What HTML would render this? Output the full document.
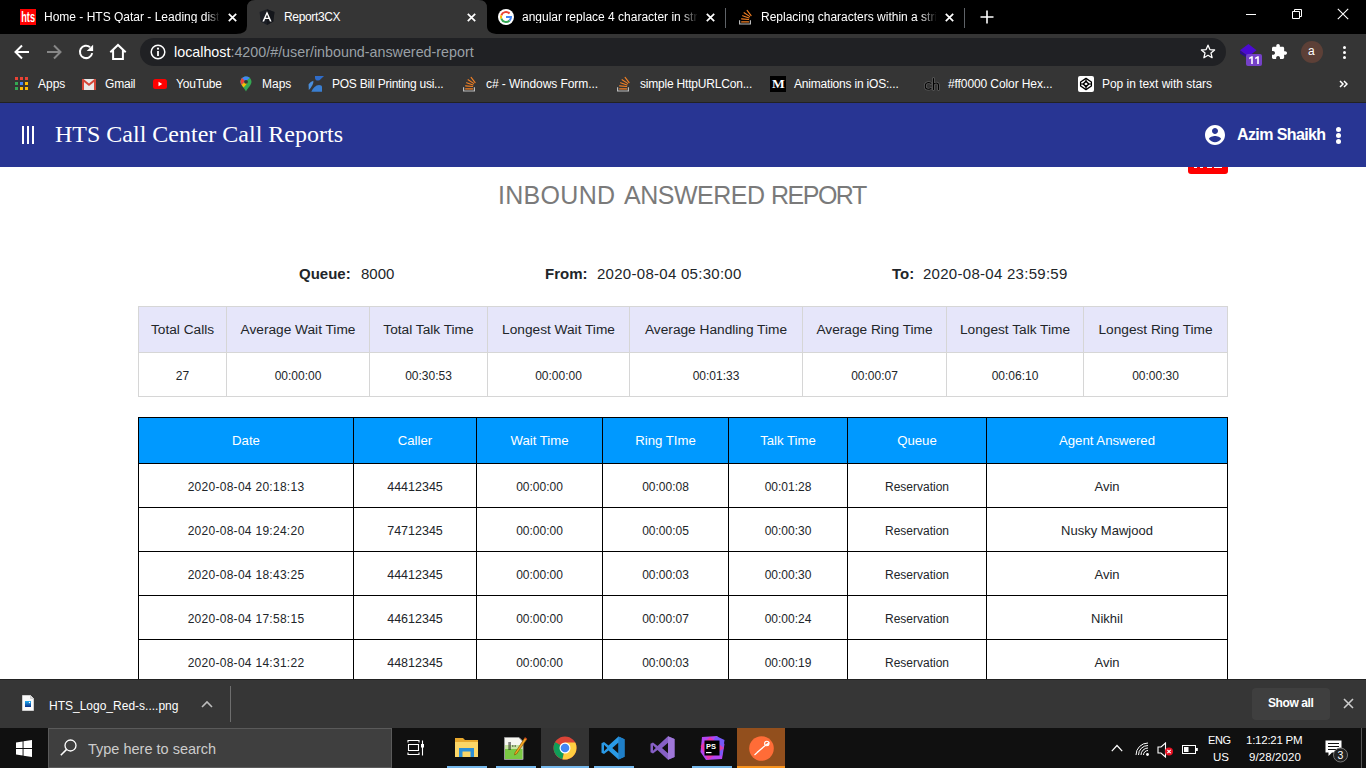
<!DOCTYPE html>
<html><head><meta charset="utf-8">
<style>
*{box-sizing:border-box;margin:0;padding:0}
html,body{width:1366px;height:768px;overflow:hidden;background:#fff;font-family:"Liberation Sans",sans-serif;position:relative}
.a{position:absolute}
.t{position:absolute;white-space:nowrap;line-height:1}
#tabs{left:0;top:0;width:1366px;height:34px;background:#000}
#toolbar{left:0;top:34px;width:1366px;height:68px;background:#353535}
#hdr{left:0;top:102px;width:1366px;height:65px;background:#283593;border-top:1px solid #222}
#dl{left:0;top:679px;width:1366px;height:49px;background:#363636;border-top:1px solid #222}
#task{left:0;top:728px;width:1366px;height:40px;background:#101010}
table{border-collapse:collapse;position:absolute;table-layout:fixed}
#sum{left:138px;top:306px;width:1089px;font-size:13.7px;color:#212529}
#sum td{border:1px solid #d6d6d6;text-align:center;padding:0}
#sum tr.h td{background:#e6e6fa;height:46px}
#sum tr.v td{height:44px;font-size:12px;padding-top:2px}
#main{left:138px;top:417px;width:1089px;font-size:12.5px;color:#212529}
#main td{border:1px solid #000;text-align:center;padding:0}
#main tr.h td{background:#0099ff;color:#fff;height:46px;font-size:13.2px}
#main tr.v td{height:44px;padding-top:2px}
#main td.tm{font-size:12px}
#main td.dt{font-size:12px;letter-spacing:0.28px}
#main td.r{font-size:12px}
#main td.n{font-size:13px}
.bm{top:9px;font-size:12px;color:#fff}
</style></head><body>
<!-- TAB STRIP -->
<div id="tabs" class="a">
  <!-- tab1 -->
  <svg class="a" style="left:20px;top:9px" width="16" height="16" viewBox="0 0 16 16"><rect width="16" height="16" fill="#ff0000"/><text x="1.2" y="13" font-family="Liberation Sans" font-weight="700" font-size="15" fill="#fff" textLength="13.8" lengthAdjust="spacingAndGlyphs">hts</text></svg>
  <div class="t" style="left:44px;top:11px;font-size:12px;color:#fff;width:176px;overflow:hidden;-webkit-mask-image:linear-gradient(90deg,#000 163px,transparent 176px)">Home - HTS Qatar - Leading distributor</div>
  <svg class="a" style="left:228px;top:12.5px" width="9" height="9" viewBox="0 0 9 9"><path d="M0.8 0.8L8.2 8.2M8.2 0.8L0.8 8.2" stroke="#fff" stroke-width="1.7"/></svg>
  <!-- active tab -->
  <svg class="a" style="left:236px;top:0" width="263" height="34" viewBox="0 0 263 34"><path d="M0 34 Q11 34 11 26 L11 8 Q11 0 19 0 L243 0 Q251 0 251 8 L251 26 Q251 34 263 34 Z" fill="#353535"/></svg>
  <svg class="a" style="left:259px;top:9px" width="16" height="16" viewBox="0 0 16 16"><path d="M8 0.3L15.4 2.9L14.3 12.6L8 16L1.7 12.6L0.6 2.9Z" fill="#1c1f26"/><path d="M8 0.3L15.4 2.9L14.3 12.6L8 16Z" fill="#14161b"/><path d="M8 2.2L3.4 12.6H5.1L6.1 10.1H9.9L10.9 12.6H12.6ZM8 5.5L9.3 8.7H6.7Z" fill="#fff"/></svg>
  <div class="t" style="left:284px;top:11px;font-size:12px;color:#fff;letter-spacing:-0.35px">Report3CX</div>
  <svg class="a" style="left:467px;top:12.5px" width="9" height="9" viewBox="0 0 9 9"><path d="M0.8 0.8L8.2 8.2M8.2 0.8L0.8 8.2" stroke="#fff" stroke-width="1.7"/></svg>
  <!-- tab3 -->
  <svg class="a" style="left:498px;top:9px" width="16" height="16" viewBox="0 0 16 16"><circle cx="8" cy="8" r="8" fill="#fff"/><g fill="none" stroke-width="2"><path d="M11.54 4.46A5 5 0 0 0 3.3 6.29" stroke="#ea4335"/><path d="M3.3 6.29A5 5 0 0 0 3.3 9.71" stroke="#fbbc05"/><path d="M3.3 9.71A5 5 0 0 0 11.54 11.54" stroke="#34a853"/><path d="M11.54 11.54A5 5 0 0 0 13 8H8" stroke="#4285f4"/></g></svg>
  <div class="t" style="left:522px;top:11px;font-size:12px;color:#fff;width:175px;overflow:hidden;-webkit-mask-image:linear-gradient(90deg,#000 160px,transparent 176px)">angular replace 4 character in string</div>
  <svg class="a" style="left:706px;top:12.5px" width="9" height="9" viewBox="0 0 9 9"><path d="M0.8 0.8L8.2 8.2M8.2 0.8L0.8 8.2" stroke="#fff" stroke-width="1.7"/></svg>
  <div class="a" style="left:725px;top:8px;width:1px;height:20px;background:#5f6368"></div>
  <!-- tab4 -->
  <svg class="a" style="left:739px;top:8.5px" width="13" height="16" viewBox="0 0 13 16"><path d="M0.6 11.2V15H11.4V11.2" fill="none" stroke="#bcbcbc" stroke-width="1.2"/><path d="M2.6 12.9H9.6M2.6 9.9L9.6 10.5M3.6 6.7L10.1 8.9M5.1 3.7L10.6 7.4M8.1 1.4L12.1 6.6" fill="none" stroke="#f48024" stroke-width="1.1" stroke-linecap="round"/></svg>
  <div class="t" style="left:761px;top:11px;font-size:12px;color:#fff;width:175px;overflow:hidden;-webkit-mask-image:linear-gradient(90deg,#000 160px,transparent 176px)">Replacing characters within a string</div>
  <svg class="a" style="left:945px;top:12.5px" width="9" height="9" viewBox="0 0 9 9"><path d="M0.8 0.8L8.2 8.2M8.2 0.8L0.8 8.2" stroke="#fff" stroke-width="1.7"/></svg>
  <div class="a" style="left:964px;top:8px;width:1px;height:20px;background:#5f6368"></div>
  <svg class="a" style="left:980px;top:10px" width="14" height="14" viewBox="0 0 14 14"><path d="M7 0.5V13.5M0.5 7H13.5" stroke="#fff" stroke-width="1.6"/></svg>
  <!-- window controls -->
  <div class="a" style="left:1246px;top:14px;width:10px;height:1px;background:#fff"></div>
  <svg class="a" style="left:1291px;top:8px" width="12" height="12" viewBox="0 0 12 12"><path d="M1.5 3.5h7v7h-7z M3.5 3.5V1.5h7v7h-2" fill="none" stroke="#fff" stroke-width="1"/></svg>
  <svg class="a" style="left:1337px;top:8px" width="12" height="12" viewBox="0 0 12 12"><path d="M0.8 0.8L11.2 11.2M11.2 0.8L0.8 11.2" stroke="#fff" stroke-width="1.1"/></svg>
</div>
<!-- TOOLBAR -->
<div id="toolbar" class="a">
  <svg class="a" style="left:14px;top:10px" width="16" height="16" viewBox="0 0 16 16"><path d="M15 8H2M8 1.5L1.5 8L8 14.5" fill="none" stroke="#fff" stroke-width="2"/></svg>
  <svg class="a" style="left:46px;top:10px" width="16" height="16" viewBox="0 0 16 16"><path d="M1 8H14M8 1.5L14.5 8L8 14.5" fill="none" stroke="#878787" stroke-width="2"/></svg>
  <svg class="a" style="left:78px;top:10px" width="17" height="17" viewBox="0 0 17 17"><path d="M14.19 9.08A6.2 6.2 0 1 1 12.09 3.15" fill="none" stroke="#fff" stroke-width="2"/><path d="M15.1 0.8V7H8.7Z" fill="#fff"/></svg>
  <svg class="a" style="left:109px;top:9px" width="18" height="18" viewBox="0 0 18 18"><path d="M1.3 9.3L9 2L16.7 9.3M4.1 7.3V16H13.9V7.3" fill="none" stroke="#fff" stroke-width="2"/></svg>
  <div class="a" style="left:140px;top:4px;width:1086px;height:28px;border-radius:14px;background:#202124"></div>
  <svg class="a" style="left:150px;top:10px" width="16" height="16" viewBox="0 0 16 16"><circle cx="8" cy="8" r="6.8" fill="none" stroke="#fff" stroke-width="1.5"/><path d="M8 7V12" stroke="#fff" stroke-width="1.8"/><circle cx="8" cy="4.7" r="1.1" fill="#fff"/></svg>
  <div class="t" style="left:174px;top:11px;font-size:14.3px;color:#fff">localhost<span style="color:#9aa0a6">:4200/#/user/inbound-answered-report</span></div>
  <svg class="a" style="left:1200px;top:10px" width="16" height="15" viewBox="0 0 16 15"><path d="M8 1.2L9.9 5.6L14.6 6L11 9.1L12.1 13.7L8 11.3L3.9 13.7L5 9.1L1.4 6L6.1 5.6Z" fill="none" stroke="#fff" stroke-width="1.3" stroke-linejoin="round"/></svg>
  <svg class="a" style="left:1240px;top:10px" width="17" height="15" viewBox="0 0 17 15"><path d="M0 6.5V9.5L8 14.5V12.5Z" fill="#2b0c8f"/><path d="M8.5 0L16.5 6.2L8.5 12.5L0 6.2Z" fill="#4b0ad2"/></svg>
  <div class="a" style="left:1246px;top:20px;width:16px;height:12px;border-radius:2px;background:#7541c8"></div><svg class="a" style="left:1246px;top:20px" width="16" height="12" viewBox="0 0 16 12"><path d="M3.2 3.5L5.6 2.2H6.8V10H5.2V4.2L3.2 5.2Z M9.2 3.5L11.6 2.2H12.8V10H11.2V4.2L9.2 5.2Z" fill="#fff"/></svg>
  <svg class="a" style="left:1272px;top:10px" width="15" height="15" viewBox="2 1 21 21"><path fill="#fff" d="M20.5 11H19V7c0-1.1-.9-2-2-2h-4V3.5C13 2.12 11.88 1 10.5 1S8 2.12 8 3.5V5H4c-1.1 0-1.99.9-1.99 2v3.8H3.5c1.49 0 2.7 1.21 2.7 2.7s-1.21 2.7-2.7 2.7H2V20c0 1.1.9 2 2 2h3.8v-1.5c0-1.49 1.21-2.7 2.7-2.7 1.49 0 2.7 1.21 2.7 2.7V22H17c1.1 0 2-.9 2-2v-4h1.5c1.38 0 2.5-1.12 2.5-2.5S21.88 11 20.5 11z"/></svg>
  <div class="a" style="left:1301px;top:7px;width:22px;height:22px;border-radius:50%;background:#5d4037"></div>
  <div class="t" style="left:1308px;top:11px;font-size:12px;color:#fff">a</div>
  <div class="a" style="left:1343px;top:12px;width:3px;height:3px;border-radius:50%;background:#fff"></div>
  <div class="a" style="left:1343px;top:17px;width:3px;height:3px;border-radius:50%;background:#fff"></div>
  <div class="a" style="left:1343px;top:22px;width:3px;height:3px;border-radius:50%;background:#fff"></div>
</div>
<!-- BOOKMARKS (inside toolbar, offset 34) -->
<div class="a" style="left:0;top:69px;width:1366px;height:33px">
  <svg class="a" style="left:15px;top:42px;top:8px" width="14" height="14" viewBox="0 0 14 14">
    <rect x="0" y="0" width="3" height="3" fill="#ea4335"/><rect x="5" y="0" width="3" height="3" fill="#ea4335"/><rect x="10" y="0" width="3" height="3" fill="#ea4335"/>
    <rect x="0" y="5" width="3" height="3" fill="#34a853"/><rect x="5" y="5" width="3" height="3" fill="#4285f4"/><rect x="10" y="5" width="3" height="3" fill="#fbbc05"/>
    <rect x="0" y="10" width="3" height="3" fill="#34a853"/><rect x="5" y="10" width="3" height="3" fill="#fbbc05"/><rect x="10" y="10" width="3" height="3" fill="#fbbc05"/>
  </svg>
  <div class="t bm" style="left:38px">Apps</div>
  <svg class="a" style="left:82px;top:10px" width="14" height="11" viewBox="0 0 14 11"><rect x="0" y="0" width="14" height="11" fill="#e8e8e8"/><path d="M0 0V11H2V3L7 7L12 3V11H14V0H12.5L7 4.5L1.5 0Z" fill="#d44638"/></svg>
  <div class="t bm" style="left:105px;letter-spacing:-0.2px">Gmail</div>
  <svg class="a" style="left:153px;top:10px" width="14" height="10" viewBox="0 0 14 10"><rect x="0" y="0" width="14" height="10" rx="2.5" fill="#ff0000"/><path d="M5.5 2.8V7.2L9.2 5Z" fill="#fff"/></svg>
  <div class="t bm" style="left:176px;letter-spacing:-0.2px">YouTube</div>
  <svg class="a" style="left:240px;top:7px" width="12" height="16" viewBox="0 0 12 16"><path d="M6 0.5C9 0.5 11.5 2.8 11.5 5.8C11.5 9.5 7.5 12 6 15.5C4.5 12 0.5 9.5 0.5 5.8C0.5 2.8 3 0.5 6 0.5Z" fill="#34a853"/><path d="M6 0.5C3 0.5 0.5 2.8 0.5 5.8C0.5 7 1 8 1.6 8.8L9.8 1.7C8.8 0.9 7.5 0.5 6 0.5Z" fill="#4285f4"/><path d="M0.5 5.8C0.5 4.3 1.1 3 2.1 2L5 5L1.6 8.8C1 8 0.5 7 0.5 5.8Z" fill="#ea4335"/><path d="M1.6 8.8L5 5.8L7 7.5L3.6 11.5C2.8 10.6 2.1 9.7 1.6 8.8Z" fill="#fbbc05"/><circle cx="6" cy="5.8" r="1.9" fill="#353535"/></svg>
  <div class="t bm" style="left:262px">Maps</div>
  <svg class="a" style="left:308px;top:6px" width="17" height="18" viewBox="0 0 17 18"><path d="M7 0.9H16L11.5 5.2Q9.5 5.8 8.2 5.2Q7 4.5 7 3Z" fill="#2f6cc9"/><path d="M0.6 9.2Q2.5 6.2 5.4 5.7Q5.8 9.8 0.8 15Z" fill="#4a8fdc"/><path d="M3.3 16.8Q6 10.5 11 10Q14 10 14 12V16.8Z" fill="#3a7fd2"/></svg>
  <div class="t bm" style="left:332px;letter-spacing:-0.25px">POS Bill Printing usi...</div>
  <svg class="a" style="left:463px;top:7px" width="13" height="16" viewBox="0 0 13 16"><path d="M0.6 11.2V15H11.4V11.2" fill="none" stroke="#bcbcbc" stroke-width="1.2"/><path d="M2.6 12.9H9.6M2.6 9.9L9.6 10.5M3.6 6.7L10.1 8.9M5.1 3.7L10.6 7.4M8.1 1.4L12.1 6.6" fill="none" stroke="#f48024" stroke-width="1.1" stroke-linecap="round"/></svg>
  <div class="t bm" style="left:486px;letter-spacing:-0.07px">c# - Windows Form...</div>
  <svg class="a" style="left:617px;top:7px" width="13" height="16" viewBox="0 0 13 16"><path d="M0.6 11.2V15H11.4V11.2" fill="none" stroke="#bcbcbc" stroke-width="1.2"/><path d="M2.6 12.9H9.6M2.6 9.9L9.6 10.5M3.6 6.7L10.1 8.9M5.1 3.7L10.6 7.4M8.1 1.4L12.1 6.6" fill="none" stroke="#f48024" stroke-width="1.1" stroke-linecap="round"/></svg>
  <div class="t bm" style="left:640px;letter-spacing:-0.2px">simple HttpURLCon...</div>
  <div class="a" style="left:770px;top:7px;width:16px;height:16px;background:#000"></div>
  <div class="t" style="left:772px;top:7.5px;font-family:'Liberation Serif',serif;font-weight:700;font-size:13.5px;color:#fff;letter-spacing:-0.5px">M</div>
  <div class="t bm" style="left:794px;letter-spacing:-0.2px">Animations in iOS:...</div>
  <svg class="a" style="left:922px;top:7px" width="20" height="16" viewBox="0 0 20 16"><g fill="none" stroke-linecap="round"><path d="M9 7.3Q7.8 6.5 6.3 6.5Q3.3 6.8 3.3 10Q3.3 13.3 6.3 13.3Q7.7 13.3 9 12.5M11.5 2.5V13.5M11.5 8.5Q12.5 7 14.3 7Q16.5 7 16.5 9.5V13.5" stroke="#5f5f5f" stroke-width="2.6"/><path d="M9 7.3Q7.8 6.5 6.3 6.5Q3.3 6.8 3.3 10Q3.3 13.3 6.3 13.3Q7.7 13.3 9 12.5M11.5 2.5V13.5M11.5 8.5Q12.5 7 14.3 7Q16.5 7 16.5 9.5V13.5" stroke="#000" stroke-width="1.1"/></g></svg>
  <div class="t bm" style="left:948px;letter-spacing:-0.1px">#ff0000 Color Hex...</div>
  <svg class="a" style="left:1078px;top:7px" width="16" height="16" viewBox="0 0 16 16"><rect x="0" y="0" width="16" height="16" rx="2" fill="#fff"/><g fill="none" stroke="#000" stroke-linejoin="round"><path d="M8 2.4L13.4 6V10L8 13.6L2.6 10V6Z" stroke-width="1.3"/><path d="M8 5.4L10.8 8L8 10.6L5.2 8Z" stroke-width="1.5"/><path d="M8 2.4V5.4M8 10.6V13.6M2.6 8H5.2M10.8 8H13.4" stroke-width="1.1"/></g></svg>
  <div class="t bm" style="left:1102px;letter-spacing:-0.03px">Pop in text with stars</div>
  <svg class="a" style="left:1339px;top:11px" width="9" height="8" viewBox="0 0 9 8"><path d="M1 1L4 4L1 7M5 1L8 4L5 7" fill="none" stroke="#fff" stroke-width="1.5"/></svg>
</div>
<!-- APP HEADER -->
<div id="hdr" class="a">
  <div class="a" style="left:22px;top:23px;width:2px;height:18px;background:#fff"></div>
  <div class="a" style="left:27px;top:23px;width:2px;height:18px;background:#fff"></div>
  <div class="a" style="left:32px;top:23px;width:2px;height:18px;background:#fff"></div>
  <div class="t" style="left:55px;top:19px;font-family:'Liberation Serif',serif;font-size:24px;color:#fff">HTS Call Center Call Reports</div>
  <svg class="a" style="left:1203px;top:20px" width="24" height="24" viewBox="0 0 24 24"><path fill="#fff" d="M12 2C6.48 2 2 6.48 2 12s4.48 10 10 10 10-4.48 10-10S17.52 2 12 2zm0 3c1.66 0 3 1.34 3 3s-1.34 3-3 3-3-1.34-3-3 1.34-3 3-3zm0 14.2c-2.5 0-4.71-1.28-6-3.22.03-1.99 4-3.08 6-3.08 1.99 0 5.97 1.09 6 3.08-1.29 1.94-3.5 3.22-6 3.22z"/></svg>
  <div class="t" style="left:1237px;top:24px;font-size:16px;font-weight:700;color:#fff;letter-spacing:-0.6px">Azim Shaikh</div>
  <div class="a" style="left:1335.5px;top:23.5px;width:5px;height:5px;border-radius:50%;background:#fff"></div>
  <div class="a" style="left:1335.5px;top:29.5px;width:5px;height:5px;border-radius:50%;background:#fff"></div>
  <div class="a" style="left:1335.5px;top:35.5px;width:5px;height:5px;border-radius:50%;background:#fff"></div>
</div>
<div id="redbox" class="a" style="left:1188px;top:167px;width:40px;height:7px;background:#ff0000;border-radius:0 0 3px 3px"><div class="a" style="left:6px;top:0;width:3px;height:1px;background:#fff"></div><div class="a" style="left:12px;top:0;width:3px;height:1px;background:#fff"></div><div class="a" style="left:19px;top:0;width:5px;height:1px;background:#fff"></div><div class="a" style="left:26px;top:0;width:8px;height:1px;background:#fff"></div></div>
<div class="t" style="left:498px;top:183px;font-size:25px;color:#7a7a7a;letter-spacing:0.3px">INBOUND</div>
<div class="t" style="left:624px;top:183px;font-size:25px;color:#7a7a7a;letter-spacing:-0.5px">ANSWERED</div>
<div class="t" style="left:771px;top:183px;font-size:25px;color:#7a7a7a;letter-spacing:-1.5px">REPORT</div>

<div class="t" style="left:299px;top:266px;font-size:15px;font-weight:700;color:#212529">Queue:</div>
<div class="t" style="left:361px;top:266px;font-size:15px;color:#212529">8000</div>
<div class="t" style="left:545px;top:266px;font-size:15px;font-weight:700;color:#212529">From:</div>
<div class="t" style="left:597px;top:266px;font-size:15px;color:#212529;letter-spacing:0.28px">2020-08-04 05:30:00</div>
<div class="t" style="left:892px;top:266px;font-size:15px;font-weight:700;color:#212529">To:</div>
<div class="t" style="left:923px;top:266px;font-size:15px;color:#212529;letter-spacing:0.28px">2020-08-04 23:59:59</div>

<table id="sum">
<colgroup><col style="width:88px"><col style="width:143px"><col style="width:118px"><col style="width:142px"><col style="width:173px"><col style="width:144px"><col style="width:137px"><col style="width:144px"></colgroup>
<tr class="h"><td>Total Calls</td><td>Average Wait Time</td><td>Total Talk Time</td><td>Longest Wait Time</td><td>Average Handling Time</td><td>Average Ring Time</td><td>Longest Talk Time</td><td>Longest Ring Time</td></tr>
<tr class="v"><td>27</td><td>00:00:00</td><td>00:30:53</td><td>00:00:00</td><td>00:01:33</td><td>00:00:07</td><td>00:06:10</td><td>00:00:30</td></tr>
</table>

<table id="main">
<colgroup><col style="width:215px"><col style="width:123px"><col style="width:126px"><col style="width:126px"><col style="width:119px"><col style="width:139px"><col style="width:241px"></colgroup>
<tr class="h"><td>Date</td><td>Caller</td><td>Wait Time</td><td>Ring TIme</td><td>Talk Time</td><td>Queue</td><td>Agent Answered</td></tr>
<tr class="v"><td class="dt">2020-08-04 20:18:13</td><td>44412345</td><td class="tm">00:00:00</td><td class="tm">00:00:08</td><td class="tm">00:01:28</td><td class="r">Reservation</td><td class="n">Avin</td></tr>
<tr class="v"><td class="dt">2020-08-04 19:24:20</td><td>74712345</td><td class="tm">00:00:00</td><td class="tm">00:00:05</td><td class="tm">00:00:30</td><td class="r">Reservation</td><td class="n">Nusky Mawjood</td></tr>
<tr class="v"><td class="dt">2020-08-04 18:43:25</td><td>44412345</td><td class="tm">00:00:00</td><td class="tm">00:00:03</td><td class="tm">00:00:30</td><td class="r">Reservation</td><td class="n">Avin</td></tr>
<tr class="v"><td class="dt">2020-08-04 17:58:15</td><td>44612345</td><td class="tm">00:00:00</td><td class="tm">00:00:07</td><td class="tm">00:00:24</td><td class="r">Reservation</td><td class="n">Nikhil</td></tr>
<tr class="v"><td class="dt">2020-08-04 14:31:22</td><td>44812345</td><td class="tm">00:00:00</td><td class="tm">00:00:03</td><td class="tm">00:00:19</td><td class="r">Reservation</td><td class="n">Avin</td></tr>
</table>

<!-- DOWNLOADS BAR -->
<div id="dl" class="a">
  <svg class="a" style="left:22px;top:15px" width="12" height="16" viewBox="0 0 12 16"><defs><linearGradient id="fg" x1="0" y1="0" x2="0" y2="1"><stop offset="0" stop-color="#1eb0f5"/><stop offset="1" stop-color="#0a2e8a"/></linearGradient></defs><path d="M0.5 0.5H8.5L11.5 3.5V15.5H0.5Z" fill="#fafafa" stroke="#cfcfcf" stroke-width="1"/><path d="M8.5 0.5V3.5H11.5" fill="#ddd" stroke="#cfcfcf" stroke-width="1"/><rect x="3" y="6" width="6" height="6" fill="url(#fg)"/><circle cx="7.5" cy="7.5" r="0.7" fill="#fff"/></svg>
  <div class="t" style="left:49px;top:20px;font-size:12px;color:#fff">HTS_Logo_Red-s....png</div>
  <svg class="a" style="left:201px;top:20px" width="12" height="8" viewBox="0 0 12 8"><path d="M1 7L6 2L11 7" fill="none" stroke="#bdbdbd" stroke-width="1.6"/></svg>
  <div class="a" style="left:230px;top:6px;width:1px;height:36px;background:#6e6e6e"></div>
  <div class="a" style="left:1252px;top:7.5px;width:78px;height:32px;border-radius:4px;background:#3f3f3f"></div>
  <div class="t" style="left:1268px;top:17px;font-size:12px;font-weight:700;color:#fff;letter-spacing:-0.4px">Show all</div>
  <svg class="a" style="left:1342.5px;top:17.5px" width="11" height="11" viewBox="0 0 11 11"><path d="M1 1L10 10M10 1L1 10" stroke="#ccc" stroke-width="1.6"/></svg>
</div>
<!-- TASKBAR -->
<div id="task" class="a">
  <svg class="a" style="left:16px;top:12px" width="16" height="17" viewBox="0 0 17 17" preserveAspectRatio="none"><path d="M0 2.4L7 1.4V8H0Z M8 1.3L17 0V8H8Z M0 9H7V15.6L0 14.6Z M8 9H17V17L8 15.7Z" fill="#fff"/></svg>
  <div class="a" style="left:48px;top:0;width:344px;height:40px;background:#3f3f3f;border:1px solid #5a5a5a"></div>
  <svg class="a" style="left:60px;top:11px" width="17" height="17" viewBox="0 0 17 17"><circle cx="10.5" cy="6.5" r="5.5" fill="none" stroke="#fff" stroke-width="1.3"/><path d="M6.6 10.4L0.8 16.2" stroke="#fff" stroke-width="1.5"/></svg>
  <div class="t" style="left:88px;top:14px;font-size:14.5px;color:#ccc">Type here to search</div>
  <svg class="a" style="left:407px;top:12px" width="18" height="16" viewBox="0 0 18 16"><path d="M1 2.5V0.5H12V2.5M1.5 4.5H11.5V10.5H1.5Z M1 12.5V14.5H12V12.5 M15.5 0.5V15.5" fill="none" stroke="#fff" stroke-width="1.1"/><rect x="14" y="4" width="3" height="3.5" fill="#fff"/></svg>
  <!-- explorer -->
  <svg class="a" style="left:455px;top:10px" width="23" height="19" viewBox="0 0 23 19"><path d="M0 0H8L10 2H23V19H0Z" fill="#e8a92e"/><path d="M0 4H23V19H0Z" fill="#fcd667"/><path d="M4 10H19V19H15.5V13.5H7.5V19H4Z" fill="#2d8fd6"/></svg>
  <div class="a" style="left:447px;top:38px;width:40px;height:2px;background:#76b9ed"></div>
  <!-- notepad++ -->
  <svg class="a" style="left:504px;top:8px" width="24" height="24" viewBox="0 0 24 24"><path d="M0.5 1.5H15L19 5.5V23.5H0.5Z" fill="#f7f7f0" stroke="#999" stroke-width="1"/><path d="M1 13H18.5V23H1Z" fill="#7ac943"/><path d="M1 9H18.5V13H1Z" fill="#c8e6a0"/><path d="M5 6V14M6.2 6V14" stroke="#222" stroke-width="0.8"/><path d="M8 10H9.5M10.5 10H12" stroke="#222" stroke-width="1"/><path d="M21 1.5L23 3L12.5 18L10.5 19L11 16.8Z" fill="#f5a623" stroke="#7a4a00" stroke-width="0.6"/><path d="M21 1.5L23 3L22.5 3.8L20.4 2.3Z" fill="#d33"/></svg>
  <div class="a" style="left:496px;top:38px;width:40px;height:2px;background:#76b9ed"></div>
  <!-- chrome -->
  <div class="a" style="left:541px;top:0;width:48px;height:40px;background:#333"></div>
  <svg class="a" style="left:553px;top:8px" width="24" height="24" viewBox="0 0 24 24"><circle cx="12" cy="12" r="11.5" fill="#db4437"/><path d="M12 12L2.1 6.3A11.5 11.5 0 0 0 9.5 23.2Z" fill="#0f9d58"/><path d="M12 12L9.5 23.2A11.5 11.5 0 0 0 23.5 12H12Z" fill="#ffcd40"/><path d="M12 6.5H22.3A11.5 11.5 0 0 1 23.5 12H17.5Z" fill="#ffcd40"/><path d="M12 12L6.5 12L2.1 6.3" fill="#0f9d58"/><circle cx="12" cy="12" r="5.5" fill="#fff"/><circle cx="12" cy="12" r="4.3" fill="#4285f4"/></svg>
  <div class="a" style="left:541px;top:38px;width:48px;height:2px;background:#76b9ed"></div>
  <!-- vscode -->
  <svg class="a" style="left:601px;top:8px" width="24" height="24" viewBox="0 0 24 24"><path d="M17.5 0.5L23.5 3.3V20.7L17.5 23.5L7.5 14.5L3 18L0.5 16.8V7.2L3 6L7.5 9.5ZM17.5 6.5L11.3 12L17.5 17.5Z M3 8.8V15.2L6.3 12Z" fill="#2a9ae6"/><path d="M17.5 0.5L23.5 3.3V20.7L17.5 23.5Z" fill="#1f7fc8"/></svg>
  <div class="a" style="left:594px;top:38px;width:40px;height:2px;background:#76b9ed"></div>
  <!-- visual studio -->
  <svg class="a" style="left:650px;top:8px" width="25" height="24" viewBox="0 0 25 24"><path d="M18 0.3L24.5 3V21L18 23.7L7.5 14L3 17.5L0.5 16.2V7.8L3 6.5L7.5 10ZM18 6.8L12 12L18 17.2Z M3 9.3V14.7L5.8 12Z" fill="#865fc5"/><path d="M18 0.3L24.5 3V21L18 23.7Z" fill="#9f77d8"/></svg>
  <!-- phpstorm -->
  <svg class="a" style="left:700px;top:8px" width="25" height="24" viewBox="0 0 25 24"><path d="M2 1L17 0L24.5 8L22 23L6 24L0.5 16Z" fill="#b345f1"/><path d="M24.5 4L16 0L8 14L22 20Z" fill="#765af8"/><path d="M0.5 10L10 1L24 12L8 24Z" fill="#ff318c" opacity="0.7"/><rect x="4.5" y="4.5" width="15" height="15" fill="#000"/><text x="6" y="12.5" font-family="Liberation Sans" font-weight="700" font-size="7.5" fill="#fff">PS</text><rect x="6" y="16" width="5.5" height="1.2" fill="#fff"/></svg>
  <div class="a" style="left:692px;top:38px;width:40px;height:2px;background:#76b9ed"></div>
  <!-- postman -->
  <div class="a" style="left:737px;top:0;width:48px;height:40px;background:#924f1d"></div>
  <svg class="a" style="left:749px;top:8px" width="25" height="25" viewBox="0 0 25 25"><circle cx="12.5" cy="12.5" r="12.3" fill="#ff6c37"/><path d="M5.5 19L15 10.5M8 16.5L17.5 8.5L19.5 7.2L18.8 9.5" fill="none" stroke="#fff" stroke-width="1.2"/><circle cx="17.8" cy="7.5" r="2.2" fill="none" stroke="#fff" stroke-width="1.1"/></svg>
  <div class="a" style="left:737px;top:38px;width:48px;height:2px;background:#f7931e"></div>
  <!-- tray -->
  <svg class="a" style="left:1111px;top:16px" width="12" height="8" viewBox="0 0 12 8"><path d="M0.8 7.2L6 1.5L11.2 7.2" fill="none" stroke="#fff" stroke-width="1.2"/></svg>
  <svg class="a" style="left:1135px;top:14px" width="15" height="14" viewBox="0 0 15 14"><path d="M1 13A12 12 0 0 1 13 1M3.5 13A9.5 9.5 0 0 1 13 3.5M6 13A7 7 0 0 1 13 6M8.5 13A4.5 4.5 0 0 1 13 8.5" fill="none" stroke="#fff" stroke-width="1"/><circle cx="12.5" cy="12.5" r="1.4" fill="#fff"/></svg>
  <svg class="a" style="left:1157px;top:14px" width="20" height="18" viewBox="0 0 20 18"><path d="M1 5H4L8.5 1V15L4 11H1Z" fill="none" stroke="#fff" stroke-width="1.1"/><circle cx="12" cy="9.5" r="4" fill="#e81123"/><path d="M10.3 7.8L13.7 11.2M13.7 7.8L10.3 11.2" stroke="#fff" stroke-width="1.1"/></svg>
  <svg class="a" style="left:1182px;top:17px" width="16" height="9" viewBox="0 0 16 9"><rect x="0.5" y="0.5" width="13" height="8" fill="none" stroke="#fff" stroke-width="1"/><rect x="2" y="2" width="4.5" height="5" fill="#fff"/><rect x="14" y="3" width="1.8" height="3" fill="#fff"/></svg>
  <div class="t" style="left:1208px;top:7px;font-size:11px;color:#fff;letter-spacing:-0.4px">ENG</div>
  <div class="t" style="left:1213px;top:24px;font-size:11.5px;color:#fff">US</div>
  <div class="t" style="left:1246px;top:7px;font-size:11.5px;color:#fff;letter-spacing:-0.25px">1:12:21 PM</div>
  <div class="t" style="left:1249px;top:24px;font-size:11.5px;color:#fff;letter-spacing:0.1px">9/28/2020</div>
  <svg class="a" style="left:1324px;top:11px" width="26" height="24" viewBox="0 0 26 24"><path d="M1.5 1.5H17.5V13.5H8L4.5 17V13.5H1.5Z" fill="#fff"/><path d="M4 4.5H15M4 7.5H15M4 10.5H12" stroke="#101010" stroke-width="1"/><circle cx="16.5" cy="16" r="7" fill="#222" stroke="#777" stroke-width="1"/><text x="16.5" y="19.8" text-anchor="middle" font-family="Liberation Sans" font-size="10.5" fill="#fff">3</text></svg>
  <div class="a" style="left:1361px;top:0;width:1px;height:40px;background:#555"></div>
</div>
</body></html>
